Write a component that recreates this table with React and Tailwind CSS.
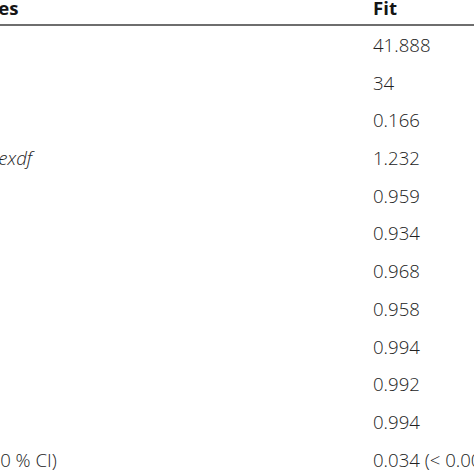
export default function App() {
  const rows = [
    { label: "χ²", value: "41.888", ml: "-ml-[80px]" },
    { label: "df", value: "34", ml: "-ml-[80px]" },
    { label: "p", value: "0.166", ml: "-ml-[80px]" },
    { label: "indexdf", value: "1.232", ml: "-ml-[27px]", italic: true },
    { label: "GFI", value: "0.959", ml: "-ml-[80px]" },
    { label: "AGFI", value: "0.934", ml: "-ml-[80px]" },
    { label: "NFI", value: "0.968", ml: "-ml-[80px]" },
    { label: "RFI", value: "0.958", ml: "-ml-[80px]" },
    { label: "IFI", value: "0.994", ml: "-ml-[80px]" },
    { label: "TLI", value: "0.992", ml: "-ml-[80px]" },
    { label: "CFI", value: "0.994", ml: "-ml-[80px]" },
    { label: "RMSEA (90 % CI)", value: "0.034 (< 0.001–0.062)", ml: "-ml-[79px]" },
  ];
  return (
    <div className="w-[474px] h-[474px] overflow-hidden bg-white text-[#222222] font-['Open_Sans',sans-serif] text-[18.6px] font-light">
      <div className="flex h-[26px] border-b-2 border-[#6e6e6e] leading-[16px] font-bold text-[#151515]">
        <div className="w-[373px] shrink-0 overflow-hidden whitespace-nowrap">
          <div className="-ml-[43px]">Values</div>
        </div>
        <div className="whitespace-nowrap">Fit</div>
      </div>
      {rows.map((r, i) => (
        <div key={i} className="flex h-[37.7px] leading-[37.7px]">
          <div className="w-[373px] shrink-0 overflow-hidden whitespace-nowrap">
            <div className={`${r.ml} ${r.italic ? "italic" : ""}`}>{r.label}</div>
          </div>
          <div className="whitespace-nowrap">{r.value}</div>
        </div>
      ))}
    </div>
  );
}
